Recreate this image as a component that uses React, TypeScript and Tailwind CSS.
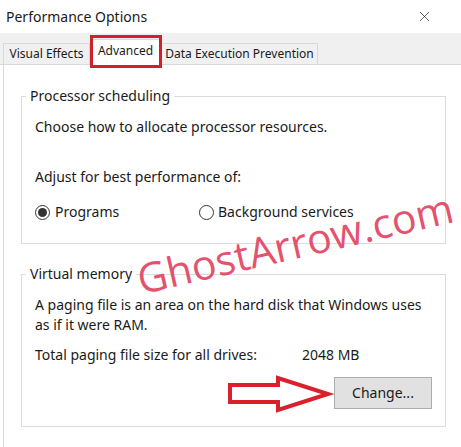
import { X } from 'lucide-react'

function Radio({ checked }: { checked?: boolean }) {
    return <span className="flex items-center justify-center w-[15px] h-[15px] rounded-full border border-[#333333] bg-white">
        {checked && <span className="w-[9px] h-[9px] rounded-full bg-[#333333]" />}
    </span>
}

export default function App() {
    return <div className="relative w-[461px] h-[447px] overflow-hidden bg-white text-[#1a1a1a] font-['Segoe_UI','Noto_Sans',sans-serif]">
        {/* title bar */}
        <div className="h-[33px] flex items-center justify-between pl-[6px] pr-[28px]">
            <span className="text-[14px]">Performance Options</span>
            <X size={17} strokeWidth={1} className="text-[#222]" />
        </div>

        {/* tabs */}
        <div className="h-[32px] bg-[#f0f0f0] border-b border-[#d9d9d9] flex items-end pl-[3px] text-[12px]">
            <div className="h-[21px] w-[87px] flex items-center justify-center border border-b-0 border-[#d9d9d9]">Visual Effects</div>
            <div className="h-[26px] w-[71px] flex items-center justify-center bg-white border border-b-0 border-[#d9d9d9] -mb-px pb-[4px]">Advanced</div>
            <div className="h-[21px] w-[157px] flex items-center justify-center border border-b-0 border-[#d9d9d9]">Data Execution Prevention</div>
        </div>

        {/* page */}
        <div className="ml-[3px] border-l border-[#d9d9d9] h-full pl-[17px] pt-[21px] text-[14px] leading-[20px] flex flex-col gap-[20px] w-[443px]">
            <fieldset className="border border-[#dcdcdc] h-[158px] pl-[13px]">
                <legend className="px-[4px] -ml-[9px]">Processor scheduling</legend>
                <div className="mt-[11px]">Choose how to allocate processor resources.</div>
                <div className="mt-[30px]">Adjust for best performance of:</div>
                <div className="mt-[15px] flex items-center">
                    <div className="flex items-center gap-[5px] w-[164px]">
                        <Radio checked />
                        <span>Programs</span>
                    </div>
                    <div className="flex items-center gap-[4px]">
                        <Radio />
                        <span>Background services</span>
                    </div>
                </div>
            </fieldset>

            <fieldset className="border border-[#dcdcdc] h-[163px] pl-[13px] pr-[8px]">
                <legend className="px-[4px] -ml-[9px]">Virtual memory</legend>
                <div className="mt-[11px]">A paging file is an area on the hard disk that Windows uses as if it were RAM.</div>
                <div className="mt-[10px] flex">
                    <span className="w-[267px]">Total paging file size for all drives:</span>
                    <span>2048 MB</span>
                </div>
                <div className="mt-[12px] flex justify-end pr-[5px]">
                    <button className="w-[98px] h-[32px] bg-[#e1e1e1] border border-[#adadad] text-[14px]">Change...</button>
                </div>
            </fieldset>
        </div>

        {/* annotations */}
        <div className="absolute left-[90px] top-[35px] w-[72px] h-[33px] border-[3px] border-[#d0202c]" />
        <svg className="absolute left-0 top-0" width="461" height="447">
            <polygon points="230,385 278,385 278,378 328,394 278,410 278,402 230,402" fill="white" stroke="#d9202b" strokeWidth="4" strokeLinejoin="miter" />
        </svg>
        <div className="absolute left-[295px] top-[243px] -translate-x-1/2 -translate-y-1/2 rotate-[-13deg] whitespace-nowrap text-[41px] text-[#e3536f] font-['Open_Sans',sans-serif] leading-none">
            GhostArrow.com
        </div>
    </div>
}
